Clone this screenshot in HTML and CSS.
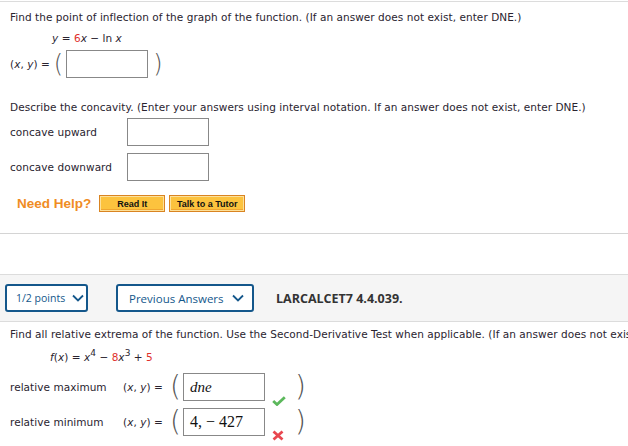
FILE: index.html
```html
<!DOCTYPE html>
<html>
<head>
<meta charset="utf-8">
<link rel="stylesheet" href="styles.css">
</head>
<body>
<div class="topline"></div>
<section class="q1">
  <p class="prompt">Find the point of inflection of the graph of the function. (If an answer does not exist, enter DNE.)</p>
  <div class="eq"><i>y</i> = <span class="red">6</span><i>x</i> − ln <i>x</i></div>
  <div class="ansrow">
    <span class="xy">(<i>x</i>, <i>y</i>) =</span>
    <span class="paren">(</span>
    <span class="box b1"></span>
    <span class="paren">)</span>
  </div>
  <p class="prompt p2">Describe the concavity. (Enter your answers using interval notation. If an answer does not exist, enter DNE.)</p>
  <div class="crow"><span class="clabel">concave upward</span><span class="box b2"></span></div>
  <div class="crow"><span class="clabel">concave downward</span><span class="box b2"></span></div>
  <div class="help">
    <span class="need">Need Help?</span>
    <span class="hbtn read">Read It</span>
    <span class="hbtn tutor">Talk to a Tutor</span>
  </div>
</section>
<div class="sep"></div>
<div class="band">
  <span class="pill p1"><span>1/2 points</span><svg width="12" height="8" viewBox="0 0 12 8"><path d="M1 1.5 L6 6.5 L11 1.5" fill="none" stroke="#14578b" stroke-width="1.8"/></svg></span>
  <span class="pill p2b"><span>Previous Answers</span><svg width="12" height="8" viewBox="0 0 12 8"><path d="M1 1.5 L6 6.5 L11 1.5" fill="none" stroke="#14578b" stroke-width="1.8"/></svg></span>
  <span class="code">LARCALCET7 4.4.039.</span>
</div>
<section class="q2">
  <p class="prompt">Find all relative extrema of the function. Use the Second-Derivative Test when applicable. (If an answer does not exist, enter DNE.)</p>
  <div class="eq eq2"><i>f</i>(<i>x</i>) = <i>x</i><sup>4</sup> − <span class="red">8</span><i>x</i><sup>3</sup> + <span class="red">5</span></div>
  <div class="rrow">
    <span class="rlabel">relative maximum</span>
    <span class="xy2">(<i>x</i>, <i>y</i>) =</span>
    <span class="bparen">(</span>
    <span class="box b3"><span class="ans it">dne</span></span>
    <span class="mark"><svg width="14" height="10" viewBox="0 0 14 10"><path d="M1.2 5 L5 8.5 L12.8 1.2" fill="none" stroke="#5cb85c" stroke-width="2.8"/></svg></span>
    <span class="bparen">)</span>
  </div>
  <div class="rrow">
    <span class="rlabel">relative minimum</span>
    <span class="xy2">(<i>x</i>, <i>y</i>) =</span>
    <span class="bparen">(</span>
    <span class="box b3"><span class="ans">4, − 427</span></span>
    <span class="mark"><svg width="12" height="11" viewBox="0 0 12 11"><path d="M1.5 1.5 L10.5 9.5 M10.5 1.5 L1.5 9.5" fill="none" stroke="#e8474f" stroke-width="2.8"/></svg></span>
    <span class="bparen">)</span>
  </div>
</section>
</body>
</html>
```
FILE: styles.css
```css
html, body { margin: 0; padding: 0; background: #fff; }
body { font-family: "DejaVu Sans", Verdana, sans-serif; font-size: 10.5px; letter-spacing: 0.05px; color: #2a2430; width: 628px; overflow: hidden; }
.topline { height: 1px; margin-top: 1px; background: #dcdcdc; }
.q1 { padding: 8px 0 0 10px; height: 220px; box-sizing: border-box; }
.prompt { margin: 0; line-height: 14px; white-space: nowrap; }
.eq { margin: 7px 0 0 42px; line-height: 14px; }
.red { color: #e0302c; }
.ansrow { display: flex; align-items: center; margin-top: 5px; height: 28px; }
.xy { margin-right: 4px; }
.paren { font-size: 24px; font-weight: 100; color: #555; line-height: 28px; font-family: "DejaVu Sans", sans-serif; }
.box { display: inline-block; box-sizing: border-box; border: 1px solid #888; background: #fff; }
.b1 { width: 82px; height: 28px; margin: 0 5px 0 3px; }
.p2 { margin-top: 22px; }
.crow { display: flex; align-items: center; height: 28px; margin-top: 4px; }
.crow + .crow { margin-top: 7px; }
.clabel { width: 117px; }
.b2 { width: 82px; height: 28px; }
.help { display: flex; align-items: center; margin-top: 14px; padding-left: 7px; }
.need { font-family: "Liberation Sans", Arial, sans-serif; font-weight: bold; font-size: 13.5px; letter-spacing: 0; color: #f08c24; margin-right: 8px; }
.hbtn { font-family: "Liberation Sans", Arial, sans-serif; font-weight: bold; font-size: 9px; letter-spacing: 0; color: #111; background: #fcc33e; border: 1px solid #d98422; box-shadow: inset 0 0 0 1px #fde09a, inset 0 -2px 0 #f0a630; height: 17px; line-height: 16px; box-sizing: border-box; text-align: center; }
.read { width: 66px; margin-right: 4px; }
.tutor { width: 76px; }
.sep { height: 1px; background: #d4d4d4; margin-top: 11px; }
.band { margin-top: 40px; height: 46px; background: #f5f5f5; border-top: 1px solid #dcdcdc; border-bottom: 1px solid #dcdcdc; display: flex; align-items: center; padding-left: 5px; font-family: "Open Sans", "Noto Sans", sans-serif; font-size: 11.5px; letter-spacing: 0; }
.pill { display: inline-flex; align-items: center; gap: 8px; height: 28px; box-sizing: border-box; border: 2px solid #14578b; border-radius: 3px; background: #fff; color: #14578b; flex: none; }
.p1 { width: 83px; margin-right: 28px; padding-left: 9px; font-size: 10.5px; gap: 7px; }
.p2b { width: 138px; margin-right: 22px; padding-left: 11px; }
.code { font-weight: bold; color: #333; font-size: 12.5px; }
.q2 { padding: 5px 0 24px 10px; }
.eq2 { margin: 9px 0 0 40px; }
.eq2 sup { font-size: 9px; line-height: 0; vertical-align: 5px; }
.rrow { display: flex; align-items: center; height: 28px; margin-top: 9px; }
.rrow + .rrow { margin-top: 7px; }
.rlabel { width: 113px; }
.xy2 { width: 47px; }
.bparen { font-size: 28px; font-weight: 100; color: #555; line-height: 30px; font-family: "DejaVu Sans", sans-serif; }
.b3 { width: 82px; height: 28px; margin-left: 2px; display: flex; align-items: center; padding-left: 6px; }
.ans { font-family: "Liberation Serif", "Times New Roman", serif; font-size: 16px; letter-spacing: 0; color: #111; }
.it { font-style: italic; font-size: 15px; }
.mark { width: 30px; height: 28px; display: flex; align-items: flex-end; padding-left: 7px; box-sizing: border-box; align-self: flex-end; margin-bottom: -5px; }
```
